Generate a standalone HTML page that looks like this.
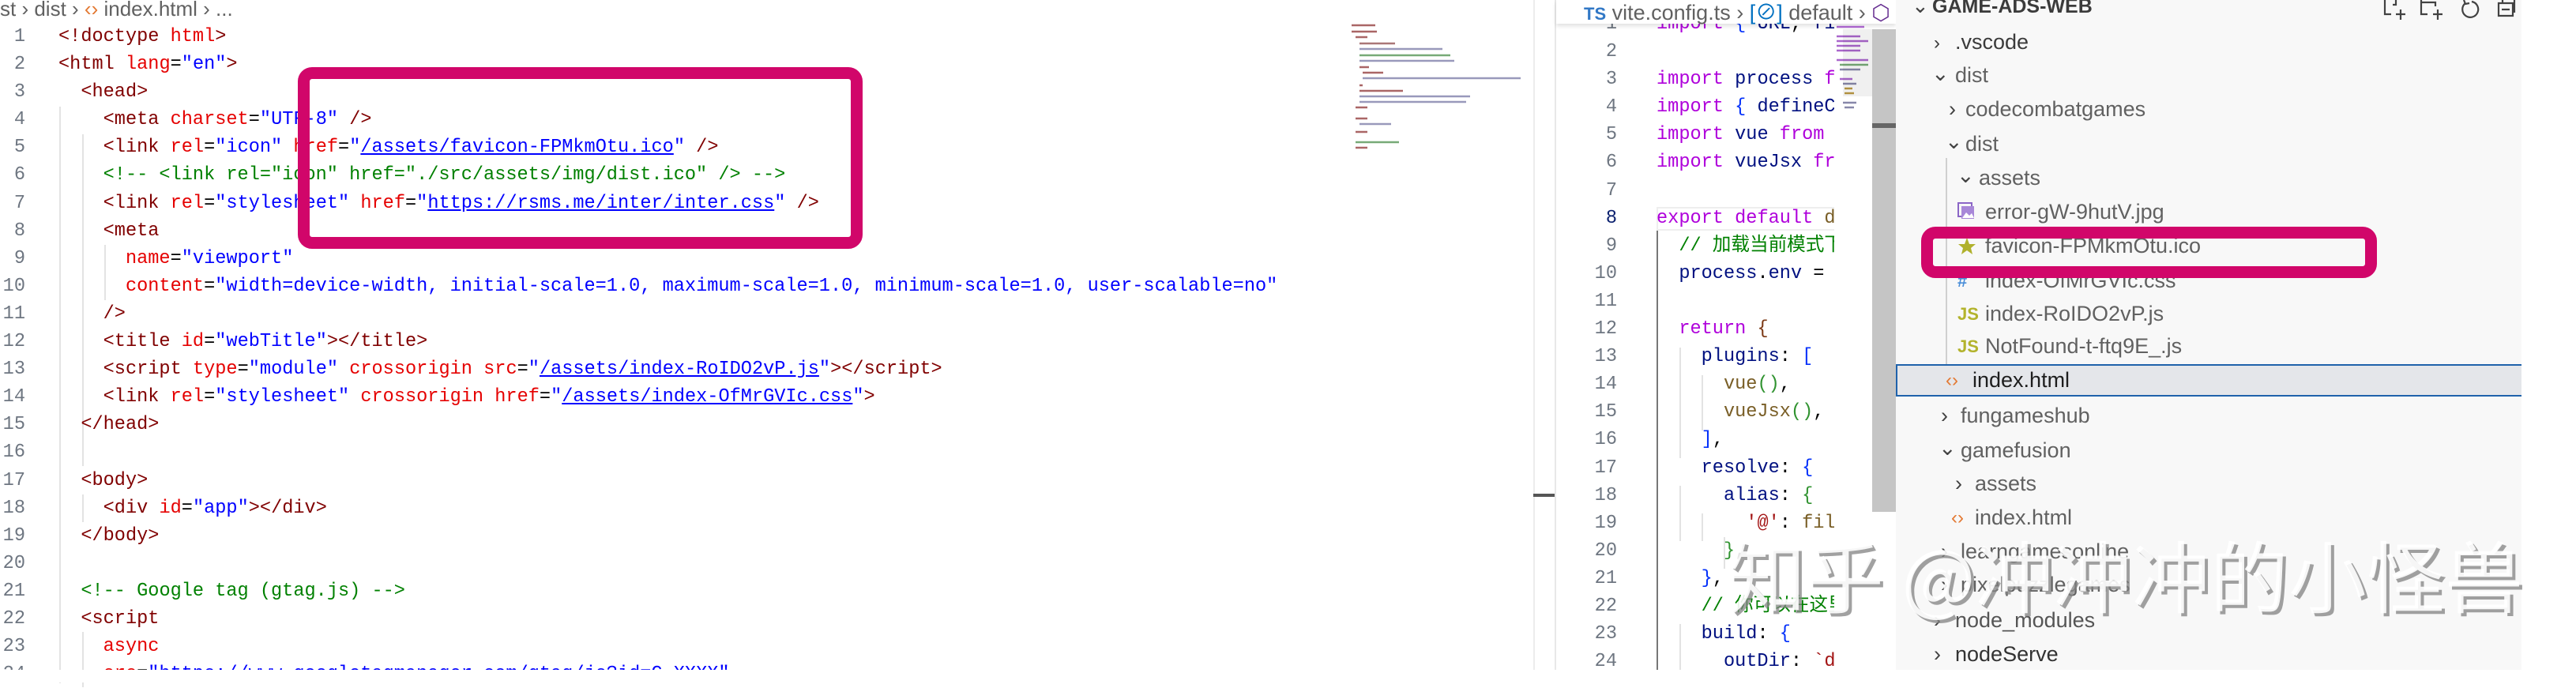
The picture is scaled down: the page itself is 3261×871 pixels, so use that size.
<!DOCTYPE html>
<html><head><meta charset="utf-8"><style>
*{margin:0;padding:0;box-sizing:border-box}
body{width:3261px;height:864px;background:#fff;position:relative;overflow:hidden;font-family:"Liberation Sans","Noto Sans CJK SC",sans-serif}
.abs{position:absolute}
.code{font-family:"Liberation Mono","Noto Sans CJK SC",monospace;font-size:23.6px;white-space:pre;line-height:35.1px}
.ln{position:absolute;text-align:right;color:#6e7681;font-family:"Liberation Mono",monospace;font-size:23.6px;line-height:35.1px;white-space:pre}
.t{color:#800000}.a{color:#e50000}.v{color:#0000ff}.u{color:#0000ff;text-decoration:underline}.c{color:#008000}.k{color:#af00db}.i{color:#001080}.f{color:#795e26}.s{color:#a31515}.b1{color:#0431fa}.b2{color:#319331}.b3{color:#7b3814}
.g{position:absolute;width:2px;background:#e3e3e3}
.row{position:absolute;font-size:27px;color:#616161;white-space:nowrap;line-height:43px;height:43px}
</style></head><body>
<div class="abs" style="left:0;top:-4px;font-size:26px;color:#616161;white-space:nowrap">st › dist › <span style="color:#e37933">‹›</span> index.html › ...</div>
<div class="ln" style="left:0;top:29px;width:32px">1
2
3
4
5
6
7
8
9
10
11
12
13
14
15
16
17
18
19
20
21
22
23
24</div>
<div class="g" style="left:75px;top:135px;height:730px"></div>
<div class="g" style="left:104px;top:170px;height:420px"></div>
<div class="g" style="left:132px;top:310px;height:70px"></div>
<div class="g" style="left:104px;top:626px;height:35px"></div>
<div class="g" style="left:104px;top:800px;height:70px"></div>
<div class="code abs" style="left:74px;top:29px"><span class="t">&lt;!doctype</span> <span class="a">html</span><span class="t">&gt;</span>
<span class="t">&lt;html</span> <span class="a">lang</span>=<span class="v">"en"</span><span class="t">&gt;</span>
  <span class="t">&lt;head&gt;</span>
    <span class="t">&lt;meta</span> <span class="a">charset</span>=<span class="v">"UTF-8"</span> <span class="t">/&gt;</span>
    <span class="t">&lt;link</span> <span class="a">rel</span>=<span class="v">"icon"</span> <span class="a">href</span>=<span class="v">"</span><span class="u">/assets/favicon-FPMkmOtu.ico</span><span class="v">"</span> <span class="t">/&gt;</span>
    <span class="c">&lt;!-- &lt;link rel="icon" href="./src/assets/img/dist.ico" /&gt; --&gt;</span>
    <span class="t">&lt;link</span> <span class="a">rel</span>=<span class="v">"stylesheet"</span> <span class="a">href</span>=<span class="v">"</span><span class="u">https://rsms.me/inter/inter.css</span><span class="v">"</span> <span class="t">/&gt;</span>
    <span class="t">&lt;meta</span>
      <span class="a">name</span>=<span class="v">"viewport"</span>
      <span class="a">content</span>=<span class="v">"width=device-width, initial-scale=1.0, maximum-scale=1.0, minimum-scale=1.0, user-scalable=no"</span>
    <span class="t">/&gt;</span>
    <span class="t">&lt;title</span> <span class="a">id</span>=<span class="v">"webTitle"</span><span class="t">&gt;&lt;/title&gt;</span>
    <span class="t">&lt;script</span> <span class="a">type</span>=<span class="v">"module"</span> <span class="a">crossorigin</span> <span class="a">src</span>=<span class="v">"</span><span class="u">/assets/index-RoIDO2vP.js</span><span class="v">"</span><span class="t">&gt;&lt;/script&gt;</span>
    <span class="t">&lt;link</span> <span class="a">rel</span>=<span class="v">"stylesheet"</span> <span class="a">crossorigin</span> <span class="a">href</span>=<span class="v">"</span><span class="u">/assets/index-OfMrGVIc.css</span><span class="v">"</span><span class="t">&gt;</span>
  <span class="t">&lt;/head&gt;</span>

  <span class="t">&lt;body&gt;</span>
    <span class="t">&lt;div</span> <span class="a">id</span>=<span class="v">"app"</span><span class="t">&gt;&lt;/div&gt;</span>
  <span class="t">&lt;/body&gt;</span>

  <span class="c">&lt;!-- Google tag (gtag.js) --&gt;</span>
  <span class="t">&lt;script</span>
    <span class="a">async</span>
    <span class="a">src</span>=<span class="v">"https://www.googletagmanager.com/gtag/js?id=G-XXXX"</span></div>
<svg class="abs" style="left:1711px;top:30px" width="215" height="135">
<g stroke-width="2.5">
<line x1="0" y1="2" x2="30" y2="2" stroke="#a66"/><line x1="0" y1="10" x2="32" y2="10" stroke="#a66"/><line x1="5" y1="17" x2="20" y2="17" stroke="#a66"/>
<line x1="10" y1="25" x2="55" y2="25" stroke="#a77"/><line x1="10" y1="32" x2="115" y2="32" stroke="#99b"/><line x1="10" y1="40" x2="125" y2="40" stroke="#7a7"/><line x1="10" y1="47" x2="130" y2="47" stroke="#99b"/>
<line x1="10" y1="55" x2="22" y2="55" stroke="#a66"/><line x1="14" y1="62" x2="40" y2="62" stroke="#a66"/><line x1="14" y1="69" x2="214" y2="69" stroke="#99b"/><line x1="10" y1="78" x2="14" y2="78" stroke="#a66"/>
<line x1="10" y1="85" x2="65" y2="85" stroke="#a66"/><line x1="10" y1="92" x2="150" y2="92" stroke="#99b"/><line x1="10" y1="99" x2="145" y2="99" stroke="#99b"/><line x1="5" y1="106" x2="20" y2="106" stroke="#a66"/>
<line x1="5" y1="120" x2="20" y2="120" stroke="#a66"/><line x1="10" y1="127" x2="50" y2="127" stroke="#99b"/></g></svg>
<svg class="abs" style="left:1711px;top:165px" width="215" height="30"><g stroke-width="2.5"><line x1="5" y1="2" x2="20" y2="2" stroke="#a66"/><line x1="5" y1="15" x2="60" y2="15" stroke="#7a7"/><line x1="5" y1="22" x2="20" y2="22" stroke="#a66"/></g></svg>
<div class="abs" style="left:1941px;top:0;width:2px;height:850px;background:#ececec"></div>
<div class="abs" style="left:1941px;top:625px;width:27px;height:4px;background:#555"></div>
<div class="abs" style="left:377px;top:85px;width:715px;height:230px;border:15px solid #d1066a;border-radius:18px"></div>

<div class="abs" style="left:1968px;top:0;width:2px;height:848px;background:#e8e8e8"></div>
<div class="ln" style="left:1990px;top:13px;width:57px">1
2
3
4
5
6
7
<span style="color:#0b216f">8</span>
9
10
11
12
13
14
15
16
17
18
19
20
21
22
23
24</div>
<div class="abs" style="left:2097px;top:262px;width:225px;height:30px;border:2px solid #eee;border-right:none"></div>
<div class="abs" style="left:2097px;top:292px;width:2px;height:556px;background:#777"></div>
<div class="g" style="left:2126px;top:440px;height:140px"></div>
<div class="g" style="left:2126px;top:615px;height:70px"></div>
<div class="g" style="left:2126px;top:790px;height:60px"></div>
<div class="g" style="left:2154px;top:475px;height:70px"></div>
<div class="g" style="left:2154px;top:650px;height:35px"></div>
<div class="g" style="left:2182px;top:680px;height:40px"></div>
<div class="abs" style="left:2097px;top:13px;width:225px;height:836px;overflow:hidden"><div class="code"><span class="k">import</span> <span class="b1">{</span> <span class="i">URL</span>, <span class="i">fileURLToPath</span>

<span class="k">import</span> <span class="i">process</span> <span class="k">from</span>
<span class="k">import</span> <span class="b1">{</span> <span class="i">defineConfig</span>
<span class="k">import</span> <span class="i">vue</span> <span class="k">from</span>
<span class="k">import</span> <span class="i">vueJsx</span> <span class="k">from</span>

<span class="k">export</span> <span class="k">default</span> <span class="f">defineConfig</span>
  <span class="c">// 加载当前模式下</span>
  <span class="i">process</span>.<span class="i">env</span> =

  <span class="k">return</span> <span class="b3">{</span>
    <span class="i">plugins</span>: <span class="b1">[</span>
      <span class="f">vue</span><span class="b2">()</span>,
      <span class="f">vueJsx</span><span class="b2">()</span>,
    <span class="b1">]</span>,
    <span class="i">resolve</span>: <span class="b1">{</span>
      <span class="i">alias</span>: <span class="b2">{</span>
        <span class="s">'@'</span>: <span class="f">fileURL</span>
      <span class="b2">}</span>,
    <span class="b1">}</span>,
    <span class="c">// 你可以在这里</span>
    <span class="i">build</span>: <span class="b1">{</span>
      <span class="i">outDir</span>: <span class="s">`dist</span></div></div>
<div class="abs" style="left:1970px;top:0;width:430px;height:30px;background:#fff;box-shadow:0 3px 5px rgba(0,0,0,.12)"></div>
<div class="abs" style="left:2005px;top:-6px;font-size:27px;color:#616161;white-space:nowrap"><span style="color:#3178c6;font-weight:bold;font-size:22px">TS</span> vite.config.ts › <span style="color:#0070c1">[⊘]</span> default › <span style="color:#652d90">⬡</span></div>
<svg class="abs" style="left:2325px;top:32px" width="45" height="120"><g stroke-width="2.5"><line x1="0" y1="2" x2="35" y2="2" stroke="#a6c"/><line x1="0" y1="14" x2="30" y2="14" stroke="#a6c"/><line x1="0" y1="20" x2="40" y2="20" stroke="#a6c"/><line x1="0" y1="26" x2="30" y2="26" stroke="#a6c"/><line x1="0" y1="32" x2="30" y2="32" stroke="#a6c"/><line x1="0" y1="44" x2="40" y2="44" stroke="#a6c"/><line x1="4" y1="50" x2="40" y2="50" stroke="#7a7"/><line x1="4" y1="56" x2="30" y2="56" stroke="#88a"/><line x1="4" y1="68" x2="20" y2="68" stroke="#a6c"/><line x1="8" y1="74" x2="25" y2="74" stroke="#88a"/><line x1="10" y1="80" x2="20" y2="80" stroke="#b94"/><line x1="10" y1="86" x2="22" y2="86" stroke="#b94"/><line x1="8" y1="98" x2="25" y2="98" stroke="#88a"/><line x1="10" y1="104" x2="22" y2="104" stroke="#88a"/></g></svg>
<div class="abs" style="left:2333px;top:37px;width:40px;height:85px;background:rgba(0,0,0,.06)"></div>
<div class="abs" style="left:2370px;top:37px;width:30px;height:611px;background:#c5c5c5"></div>
<div class="abs" style="left:2370px;top:156px;width:30px;height:6px;background:#666"></div>

<div class="abs" style="left:2400px;top:0;width:792px;height:848px;background:#f8f8f8"></div>
<div class="abs" style="left:2420px;top:-8px;font-size:26px;color:#424242">⌄</div>
<div class="abs" style="left:2446px;top:-6px;font-size:25px;font-weight:bold;color:#3b3b3b">GAME-ADS-WEB</div>
<svg class="abs" style="left:3015px;top:0" width="180" height="26" fill="none" stroke="#424242" stroke-width="2.2">
<path d="M4 0 V18 H12 M18 0 V6 H14 M24 12 V25 M18 18 H30"/>
<path d="M50 0 V18 H58 M50 3 H68 V8 M71 12 V25 M65 18 H77"/>
<path d="M106 4 A10 10 0 1 0 114 2 M104 0 L106 5 L111 4"/>
<path d="M148 4 H166 V20 H148 Z M152 12 H162 M153 4 V0 M168 0 V16"/>
</svg>
<div class="abs" style="left:2463px;top:200px;width:2px;height:302px;background:#d0d0d0"></div>
<div class="abs" style="left:2400px;top:461px;width:792px;height:41px;background:#e4e6ea;border:2px solid #1f62ab;border-right:none"></div>

<div class="row" style="left:2448px;top:32px;color:#3b3b3b"><span style="font-size:24px">›</span></div><div class="row" style="left:2475px;top:32px;color:#3b3b3b">.vscode</div>
<div class="row" style="left:2445px;top:72px;color:#424242">⌄</div><div class="row" style="left:2475px;top:74px">dist</div>
<div class="row" style="left:2467px;top:117px;color:#424242">›</div><div class="row" style="left:2488px;top:117px">codecombatgames</div>
<div class="row" style="left:2462px;top:158px;color:#424242">⌄</div><div class="row" style="left:2488px;top:161px">dist</div>
<div class="row" style="left:2477px;top:201px;color:#424242">⌄</div><div class="row" style="left:2505px;top:204px">assets</div>
<svg class="abs" style="left:2478px;top:256px" width="22" height="22"><rect x="1" y="1" width="17" height="17" fill="none" stroke="#8b66c6" stroke-width="2"/><rect x="5" y="5" width="16" height="16" fill="#a887d8"/><path d="M6 20 L11 13 L15 17 L18 14 L21 20Z" fill="#fff"/></svg>
<div class="row" style="left:2513px;top:247px">error-gW-9hutV.jpg</div>
<svg class="abs" style="left:2478px;top:300px" width="24" height="24"><path d="M12 1 L15 9 L23 9 L17 14 L19 22 L12 17 L5 22 L7 14 L1 9 L9 9Z" fill="#b0b12c"/></svg>
<div class="row" style="left:2513px;top:290px">favicon-FPMkmOtu.ico</div>
<div class="row" style="left:2478px;top:334px;color:#4a8ed8;font-weight:bold;font-size:22px">#</div><div class="row" style="left:2513px;top:334px">index-OfMrGVIc.css</div>
<div class="row" style="left:2478px;top:376px;color:#b3b32c;font-weight:bold;font-size:22px">JS</div><div class="row" style="left:2513px;top:376px">index-RoIDO2vP.js</div>
<div class="row" style="left:2478px;top:417px;color:#b3b32c;font-weight:bold;font-size:22px">JS</div><div class="row" style="left:2513px;top:417px">NotFound-t-ftq9E_.js</div>
<div class="row" style="left:2463px;top:460px;color:#e37933;font-size:24px">‹›</div><div class="row" style="left:2497px;top:460px;color:#1e1e1e">index.html</div>
<div class="row" style="left:2457px;top:505px;color:#424242">›</div><div class="row" style="left:2482px;top:505px">fungameshub</div>
<div class="row" style="left:2454px;top:546px;color:#424242">⌄</div><div class="row" style="left:2482px;top:549px">gamefusion</div>
<div class="row" style="left:2475px;top:591px;color:#424242">›</div><div class="row" style="left:2500px;top:591px">assets</div>
<div class="row" style="left:2470px;top:634px;color:#e37933;font-size:24px">‹›</div><div class="row" style="left:2500px;top:634px">index.html</div>
<div class="row" style="left:2457px;top:677px;color:#424242">›</div><div class="row" style="left:2482px;top:677px">learngamesonline</div>
<div class="row" style="left:2457px;top:719px;color:#424242">›</div><div class="row" style="left:2482px;top:719px">pixelpuzzlegames</div>
<div class="row" style="left:2448px;top:764px;color:#424242">›</div><div class="row" style="left:2475px;top:764px;color:#555">node_modules</div>
<div class="row" style="left:2448px;top:807px;color:#424242">›</div><div class="row" style="left:2475px;top:807px;color:#333">nodeServe</div>

<div class="abs" style="left:2432px;top:287px;width:577px;height:65px;border:15px solid #d1066a;border-radius:18px"></div>

<div class="abs" style="left:0;top:848px;width:3261px;height:16px;background:#fff"></div>

<div class="abs" style="left:2187px;top:668px;font-size:99px;line-height:115px;color:rgba(255,255,255,.9);text-shadow:4px 4px 0 rgba(130,130,130,.75);white-space:nowrap;font-family:'Noto Sans CJK SC',sans-serif">知乎 @冲冲冲的小怪兽</div>
</body></html>
